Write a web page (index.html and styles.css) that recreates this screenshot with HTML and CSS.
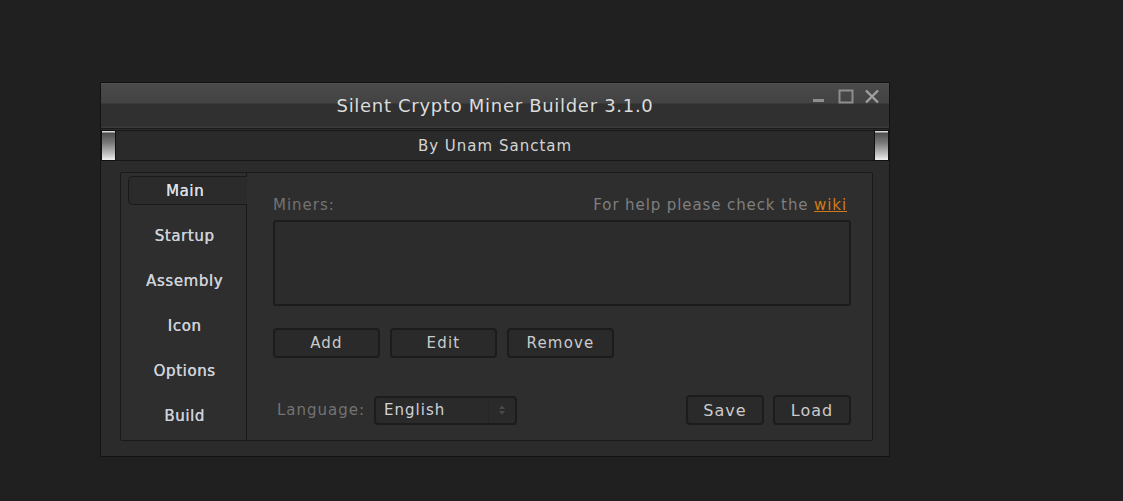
FILE: index.html
```html
<!DOCTYPE html>
<html>
<head>
<meta charset="utf-8">
<link rel="stylesheet" href="styles.css">
</head>
<body>
<div class="page">
  <div class="window">
    <div class="titlebar">
      <div class="title">Silent Crypto Miner Builder 3.1.0</div>
      <div class="controls">
        <svg class="ctl" width="16" height="16" viewBox="0 0 16 16"><rect x="1" y="10" width="11" height="3" fill="#8e8e8e"/></svg>
        <svg class="ctl" width="16" height="16" viewBox="0 0 16 16"><rect x="1.5" y="1.5" width="13" height="12" fill="none" stroke="#8e8e8e" stroke-width="2"/></svg>
        <svg class="ctl" width="16" height="16" viewBox="0 0 16 16"><path d="M2 1.5 L14 13.5 M14 1.5 L2 13.5" stroke="#a0a0a0" stroke-width="2.4" fill="none"/></svg>
      </div>
    </div>
    <div class="subbar">
      <div class="handle"></div>
      <div class="subtitle">By Unam Sanctam</div>
      <div class="handle"></div>
    </div>
    <div class="content">
      <div class="panel">
        <div class="sidebar">
          <div class="tab active">Main</div>
          <div class="tab">Startup</div>
          <div class="tab">Assembly</div>
          <div class="tab">Icon</div>
          <div class="tab">Options</div>
          <div class="tab">Build</div>
        </div>
        <div class="main">
          <div class="header">
            <span class="label">Miners:</span>
            <span class="help">For help please check the <span class="wiki">wiki</span></span>
          </div>
          <div class="listbox"></div>
          <div class="btnrow">
            <div class="btn">Add</div>
            <div class="btn">Edit</div>
            <div class="btn">Remove</div>
          </div>
          <div class="bottomrow">
            <span class="label lang">Language:</span>
            <div class="select">
              <span class="value">English</span>
              <span class="spin">
                <svg width="8" height="12" viewBox="0 0 8 12"><path d="M1 5 L4 1.5 L7 5 Z M1 7 L4 10.5 L7 7 Z" fill="#4a4a4a"/></svg>
              </span>
            </div>
            <div class="spacer"></div>
            <div class="btn small">Save</div>
            <div class="btn small">Load</div>
          </div>
        </div>
      </div>
    </div>
  </div>
</div>
</body>
</html>
```

FILE: styles.css
```css
html, body {
  margin: 0;
  padding: 0;
  background: #202020;
}
body {
  width: 1123px;
  height: 501px;
  overflow: hidden;
  font-family: "DejaVu Sans", Verdana, sans-serif;
}
.page {
  padding: 82px 0 0 100px;
}
.window {
  width: 790px;
  height: 375px;
  box-sizing: border-box;
  border: 1px solid #131313;
  background: #2b2b2b;
  display: flex;
  flex-direction: column;
}
.titlebar {
  height: 45px;
  position: relative;
  background: linear-gradient(to bottom, #565656 0px, #4a4a4a 1px, #434343 20px, #303030 21px, #303030 43px, #3a3a3a 44px);
  border-bottom: 1px solid #1b1b1b;
  display: flex;
  align-items: center;
  justify-content: center;
}
.title {
  color: #dcdcdc;
  font-size: 18px;
  letter-spacing: 0.7px;
  padding-bottom: 1px;
}
.controls {
  position: absolute;
  right: 9px;
  top: 6px;
  display: flex;
  gap: 10px;
}
.ctl { display: block; }
.subbar {
  margin-top: 1px;
  height: 31px;
  display: flex;
}
.handle {
  width: 15px;
  box-sizing: border-box;
  border: 1px solid #111;
  background: linear-gradient(to bottom, #d8d8d8 0px, #d8d8d8 1px, #4e4e4e 2px, #7a7a7a 12px, #c8c8c8 24px, #f0f0f0 29px);
}
.subtitle {
  flex: 1;
  box-sizing: border-box;
  border: 1px solid #171717;
  border-left: none;
  border-right: none;
  background: #2a2a2a;
  color: #d4d4d4;
  font-size: 15px;
  letter-spacing: 1px;
  display: flex;
  align-items: center;
  justify-content: center;
}
.content {
  flex: 1;
  padding: 11px 16px 15px 19px;
  display: flex;
}
.panel {
  flex: 1;
  box-sizing: border-box;
  border: 1px solid #1a1a1a;
  border-radius: 2px;
  background: #2e2e2e;
  display: flex;
}
.sidebar {
  width: 126px;
  box-sizing: border-box;
  border-right: 1px solid #1a1a1a;
  padding: 3px 0 0 7px;
  display: flex;
  flex-direction: column;
  gap: 16px;
}
.tab {
  height: 29px;
  display: flex;
  align-items: center;
  justify-content: center;
  color: #cdd2da;
  font-size: 15px;
  letter-spacing: 0.6px;
  text-shadow: 0.4px 0 0 #cdd2da;
  box-sizing: border-box;
  margin-right: -1px;
  padding-right: 6px;
}
.tab.active {
  border: 1px solid #1a1a1a;
  border-right: none;
  border-radius: 5px 0 0 5px;
  background: #2b2b2b;
  color: #dfe3ea;
}
.main {
  flex: 1;
  padding: 22px 21px 15px 26px;
  display: flex;
  flex-direction: column;
}
.header {
  height: 20px;
  display: flex;
  justify-content: space-between;
  align-items: center;
}
.label {
  color: #737373;
  font-size: 15px;
  letter-spacing: 1px;
}
.help {
  color: #7f7f7f;
  font-size: 15px;
  letter-spacing: 0.9px;
  margin-right: 4px;
}
.wiki {
  color: #d27a16;
  text-decoration: underline;
}
.listbox {
  margin-top: 5px;
  height: 86px;
  box-sizing: border-box;
  border: 2px solid #1c1c1c;
  border-radius: 3px;
  background: #2c2c2c;
}
.btnrow {
  margin-top: 22px;
  display: flex;
  gap: 10px;
}
.btn {
  width: 107px;
  height: 30px;
  box-sizing: border-box;
  border: 2px solid #1c1c1c;
  border-radius: 4px;
  background: #2a2a2a;
  color: #cbcbcb;
  font-size: 15px;
  letter-spacing: 1.2px;
  display: flex;
  align-items: center;
  justify-content: center;
}
.bottomrow {
  margin-top: auto;
  display: flex;
  align-items: center;
}
.lang {
  margin-left: 4px;
  margin-right: 9px;
}
.select {
  width: 143px;
  height: 29px;
  box-sizing: border-box;
  border: 2px solid #1c1c1c;
  border-radius: 4px;
  background: #2a2a2a;
  display: flex;
  align-items: stretch;
}
.select .value {
  flex: 1;
  color: #cfd3da;
  font-size: 15px;
  letter-spacing: 1px;
  padding-left: 8px;
  display: flex;
  align-items: center;
  border-right: 1px solid #252525;
}
.select .spin {
  width: 26px;
  display: flex;
  align-items: center;
  justify-content: center;
}
.spacer { flex: 1; }
.btn.small {
  width: 78px;
  margin-left: 9px;
  font-size: 16px;
  letter-spacing: 1px;
}
```
